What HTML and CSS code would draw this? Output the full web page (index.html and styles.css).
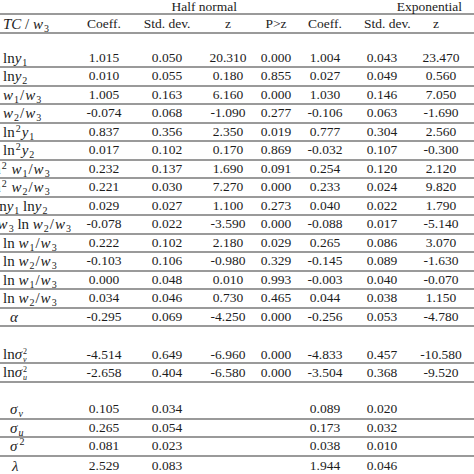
FILE: index.html
```
<!DOCTYPE html>
<html>
<head>
<meta charset="utf-8">
<link rel="stylesheet" href="styles.css">
</head>
<body>
<div class="tbl">
  <div class="row top">
    <div class="grp hn">Half normal</div>
    <div class="grp ex">Exponential</div>
  </div>
  <div class="row head">
    <div class="lab"><i>TC</i> / <i>w</i><span class="sb">3</span></div>
    <div>Coeff.</div><div>Std. dev.</div><div>z</div><div>P&gt;z</div>
    <div>Coeff.</div><div class="sdx">Std. dev.</div><div class="zx">z</div>
  </div>
  <div class="row blank first"></div>

  <div class="row"><div class="lab">ln<i>y</i><span class="sb">1</span></div><div>1.015</div><div>0.050</div><div>20.310</div><div>0.000</div><div>1.004</div><div>0.043</div><div>23.470</div></div>
  <div class="row"><div class="lab">ln<i>y</i><span class="sb">2</span></div><div>0.010</div><div>0.055</div><div>0.180</div><div>0.855</div><div>0.027</div><div>0.049</div><div>0.560</div></div>
  <div class="row"><div class="lab"><i>w</i><span class="sb">1</span><span class="sl">/</span><i>w</i><span class="sb">3</span></div><div>1.005</div><div>0.163</div><div>6.160</div><div>0.000</div><div>1.030</div><div>0.146</div><div>7.050</div></div>
  <div class="row"><div class="lab"><i>w</i><span class="sb">2</span><span class="sl">/</span><i>w</i><span class="sb">3</span></div><div>-0.074</div><div>0.068</div><div>-1.090</div><div>0.277</div><div>-0.106</div><div>0.063</div><div>-1.690</div></div>
  <div class="row"><div class="lab">ln<span class="sp">2</span><i>y</i><span class="sb">1</span></div><div>0.837</div><div>0.356</div><div>2.350</div><div>0.019</div><div>0.777</div><div>0.304</div><div>2.560</div></div>
  <div class="row"><div class="lab">ln<span class="sp">2</span><i>y</i><span class="sb">2</span></div><div>0.017</div><div>0.102</div><div>0.170</div><div>0.869</div><div>-0.032</div><div>0.107</div><div>-0.300</div></div>
  <div class="row"><div class="lab"><span class="clip c1">ln<span class="sp">2</span> <i>w</i><span class="sb">1</span><span class="sl">/</span><i>w</i><span class="sb">3</span></span></div><div>0.232</div><div>0.137</div><div>1.690</div><div>0.091</div><div>0.254</div><div>0.120</div><div>2.120</div></div>
  <div class="row"><div class="lab"><span class="clip c1">ln<span class="sp">2</span> <i>w</i><span class="sb">2</span><span class="sl">/</span><i>w</i><span class="sb">3</span></span></div><div>0.221</div><div>0.030</div><div>7.270</div><div>0.000</div><div>0.233</div><div>0.024</div><div>9.820</div></div>
  <div class="row"><div class="lab"><span class="clip c2">ln<i>y</i><span class="sb">1</span> ln<i>y</i><span class="sb">2</span></span></div><div>0.029</div><div>0.027</div><div>1.100</div><div>0.273</div><div>0.040</div><div>0.022</div><div>1.790</div></div>
  <div class="row"><div class="lab"><span class="clip c3">ln <i>w</i><span class="sb">1</span><span class="sl">/</span><i>w</i><span class="sb">3</span> ln <i>w</i><span class="sb">2</span><span class="sl">/</span><i>w</i><span class="sb">3</span></span></div><div>-0.078</div><div>0.022</div><div>-3.590</div><div>0.000</div><div>-0.088</div><div>0.017</div><div>-5.140</div></div>
  <div class="row"><div class="lab">ln <i>w</i><span class="sb">1</span><span class="sl">/</span><i>w</i><span class="sb">3</span></div><div>0.222</div><div>0.102</div><div>2.180</div><div>0.029</div><div>0.265</div><div>0.086</div><div>3.070</div></div>
  <div class="row"><div class="lab">ln <i>w</i><span class="sb">2</span><span class="sl">/</span><i>w</i><span class="sb">3</span></div><div>-0.103</div><div>0.106</div><div>-0.980</div><div>0.329</div><div>-0.145</div><div>0.089</div><div>-1.630</div></div>
  <div class="row"><div class="lab">ln <i>w</i><span class="sb">1</span><span class="sl">/</span><i>w</i><span class="sb">3</span></div><div>0.000</div><div>0.048</div><div>0.010</div><div>0.993</div><div>-0.003</div><div>0.040</div><div>-0.070</div></div>
  <div class="row"><div class="lab">ln <i>w</i><span class="sb">2</span><span class="sl">/</span><i>w</i><span class="sb">3</span></div><div>0.034</div><div>0.046</div><div>0.730</div><div>0.465</div><div>0.044</div><div>0.038</div><div>1.150</div></div>
  <div class="row"><div class="lab ind"><i>α</i></div><div>-0.295</div><div>0.069</div><div>-4.250</div><div>0.000</div><div>-0.256</div><div>0.053</div><div>-4.780</div></div>
  <div class="row blank"></div>
  <div class="row"><div class="lab">ln<i>σ</i><span class="stk"><span class="up">2</span><span class="dn"><i>v</i></span></span></div><div>-4.514</div><div>0.649</div><div>-6.960</div><div>0.000</div><div>-4.833</div><div>0.457</div><div>-10.580</div></div>
  <div class="row"><div class="lab">ln<i>σ</i><span class="stk"><span class="up">2</span><span class="dn"><i>u</i></span></span></div><div>-2.658</div><div>0.404</div><div>-6.580</div><div>0.000</div><div>-3.504</div><div>0.368</div><div>-9.520</div></div>
  <div class="row blank"></div>
  <div class="row"><div class="lab ind"><i>σ</i><span class="sb"><i>v</i></span></div><div>0.105</div><div>0.034</div><div></div><div></div><div>0.089</div><div>0.020</div><div></div></div>
  <div class="row"><div class="lab ind"><i>σ</i><span class="sb"><i>u</i></span></div><div>0.265</div><div>0.054</div><div></div><div></div><div>0.173</div><div>0.032</div><div></div></div>
  <div class="row"><div class="lab ind"><i>σ</i><span class="sp2">2</span></div><div>0.081</div><div>0.023</div><div></div><div></div><div>0.038</div><div>0.010</div><div></div></div>
  <div class="row last"><div class="lab ind2"><i>λ</i></div><div>2.529</div><div>0.083</div><div></div><div></div><div>1.944</div><div>0.046</div><div></div></div>
</div>
</body>
</html>
```
FILE: styles.css
```
html, body {
  margin: 0;
  padding: 0;
  background: #fff;
}
body {
  width: 474px;
  height: 474px;
  overflow: hidden;
  font-family: "Liberation Serif", "Times New Roman", serif;
  font-size: 13.5px;
  color: #1c1c1c;
}
.tbl {
  width: 474px;
}
.row {
  display: grid;
  grid-template-columns: 72px 64px 62px 60px 36px 62px 52px 66px;
  height: 18.5px;
  box-sizing: border-box;
  border-bottom: 2px solid #9a9a9a;
  align-items: center;
  line-height: 16px;
}
.row > div {
  text-align: center;
  white-space: nowrap;
}
.row.top {
  height: 14.5px;
  align-items: start;
  line-height: 13px;
}
.grp.hn {
  grid-column: 2 / 5;
  text-align: right;
  padding-right: 21px;
}
.grp.ex {
  grid-column: 6 / 9;
  text-align: right;
  padding-right: 12px;
}
.row.head {
  height: 19px;
  padding-top: 1px;
}
.sdx { padding-left: 8px; }
.zx { padding-right: 10px; }
.row.blank {
  border-bottom: none;
}
.row.blank.first {
  height: 16px;
}
.row.last {
  border-bottom: none;
}
.row > .lab {
  text-align: left;
  padding-left: 3px;
  font-size: 15px;
}
.lab i {
  font-style: italic;
}
.lab.ind { padding-left: 10px; }
.lab.ind2 { padding-left: 12px; }
.sl {
  margin: 0 1px;
}
.sb {
  font-size: 10px;
  vertical-align: -3px;
  line-height: 0;
  margin-left: 1px;
}
.sp {
  font-size: 10px;
  vertical-align: 5px;
  line-height: 0;
  margin-left: 1px;
  margin-right: 1px;
}
.sp2 {
  font-size: 10px;
  vertical-align: 6px;
  line-height: 0;
  margin-left: 2px;
}
.stk {
  display: inline-block;
  font-size: 8px;
  line-height: 8px;
  vertical-align: -3px;
  margin-left: 1px;
}
.stk > span {
  display: block;
}
.clip {
  display: inline-block;
}
.c1 { margin-left: -14px; }
.c2 { margin-left: -8px; }
.c3 { margin-left: -43px; }
```
